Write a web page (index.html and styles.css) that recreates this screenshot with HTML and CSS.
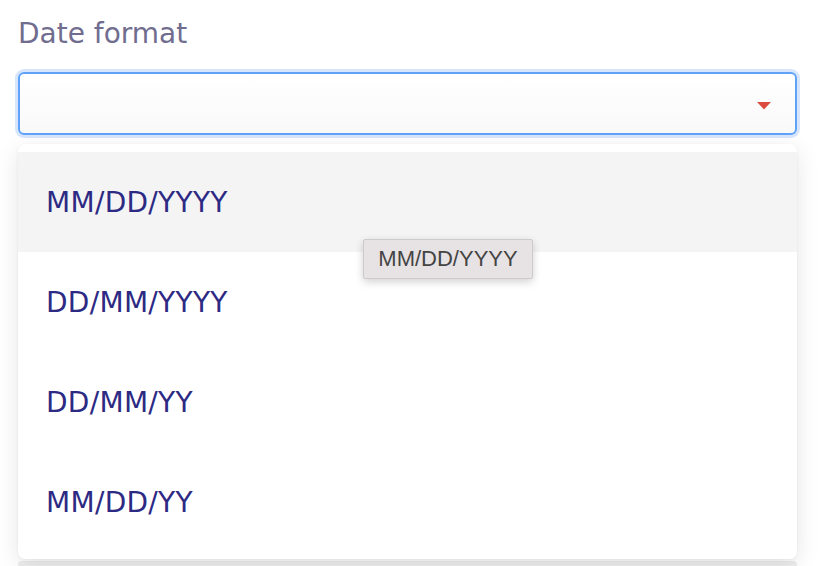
FILE: index.html
```html
<!DOCTYPE html>
<html>
<head>
<meta charset="utf-8">
<link rel="stylesheet" href="styles.css">
</head>
<body>
<div class="field">
  <label class="label">Date format</label>
  <div class="select">
    <svg class="caret" width="14" height="8" viewBox="0 0 14 8"><path d="M0 0H14L7 7.5Z" fill="#dc4b40"/></svg>
  </div>
  <div class="menu">
    <div class="item active">MM/DD/YYYY</div>
    <div class="item">DD/MM/YYYY</div>
    <div class="item">DD/MM/YY</div>
    <div class="item">MM/DD/YY</div>
  </div>
  <div class="next"></div>
</div>
<div class="tooltip">MM/DD/YYYY</div>
</body>
</html>
```
FILE: styles.css
```css
html, body { margin: 0; padding: 0; background: #fff; }
body { width: 822px; height: 566px; overflow: hidden; position: relative; font-family: "DejaVu Sans", sans-serif; }
.field { padding: 14px 25px 0 18px; display: flex; flex-direction: column; }
.label { color: #706d8f; font-size: 28px; line-height: 40px; height: 40px; margin-bottom: 18px; padding-left: 0; }
.select {
  box-sizing: border-box; height: 63px; border: 2px solid #5fa2f8; border-radius: 6px;
  box-shadow: 0 0 0 3px #d7e6fc; background: linear-gradient(#fff, #f9f9f9);
  display: flex; align-items: center; justify-content: flex-end; padding-right: 24px;
}
.caret { margin-top: 5px; }
.menu {
  margin-top: 9px; background: #fff; border-radius: 7px; padding: 8px 0 7px;
  box-shadow: 0 6px 24px rgba(0,0,0,0.10), 0 1px 3px rgba(0,0,0,0.06);
  position: relative; z-index: 1;
}
.item { height: 100px; display: flex; align-items: center; padding-left: 28px; color: #2d2a84; font-size: 28px; letter-spacing: 0.3px; }
.item.active { background: #f4f4f4; }
.next { height: 20px; margin-top: 2px; background: linear-gradient(#ececec, #f4f4f4); border-radius: 4px; }
.tooltip {
  position: absolute; left: 363px; top: 239px; box-sizing: border-box; width: 170px; height: 40px;
  background: #e7e2e3; border: 1px solid #d0cbcb; border-radius: 2px; color: #444;
  font-family: "Liberation Sans", Arial, sans-serif; font-size: 22px; line-height: 38px; text-align: center;
  box-shadow: 0 3px 8px rgba(0,0,0,0.18); z-index: 2;
}
```
